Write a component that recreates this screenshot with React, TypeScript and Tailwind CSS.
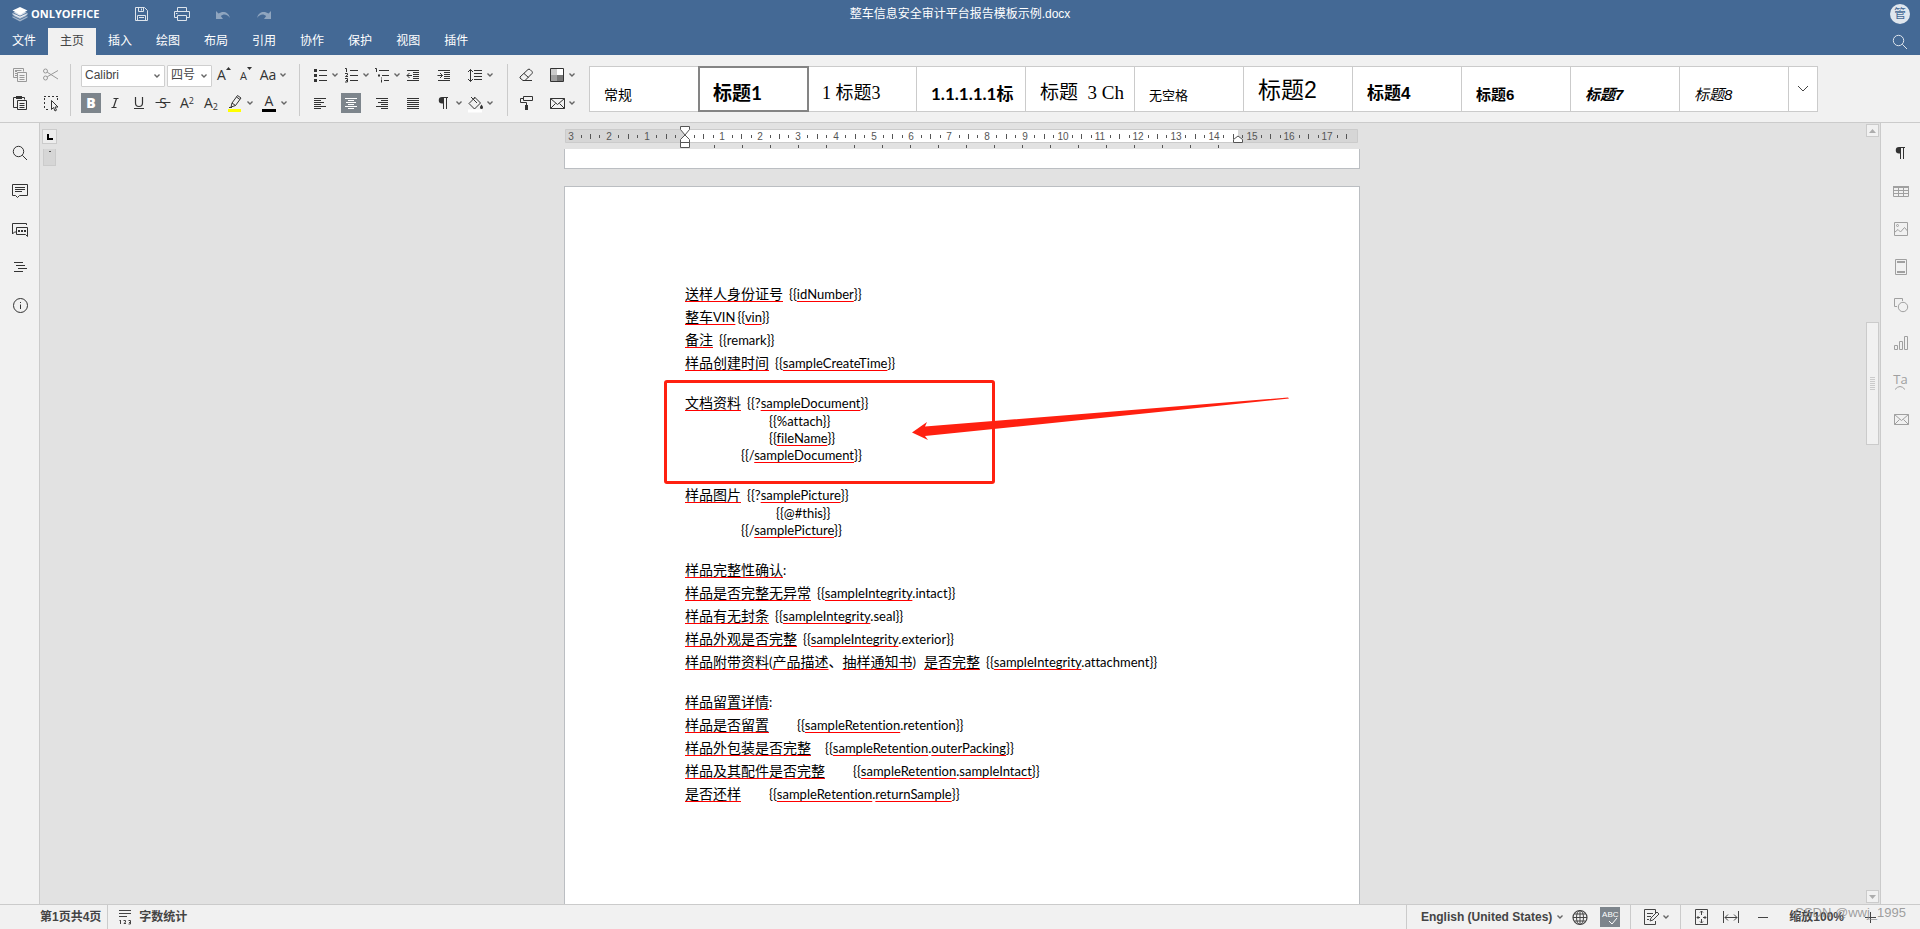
import { useState } from 'react';
import type { ReactNode } from 'react';
import clsx from 'clsx';

const tabs = ['文件', '主页', '插入', '绘图', '布局', '引用', '协作', '保护', '视图', '插件'];

const ui = "font-['Liberation_Sans','Noto_Sans_CJK_SC',sans-serif]";
const lato = "font-['Lato','Noto_Sans_CJK_SC',sans-serif]";
const serif = "font-['Liberation_Serif','Noto_Sans_CJK_SC',serif]";

const styleItems = [
  { name: '常规', cls: `${lato} text-[14px]` },
  { name: '标题1', cls: `${lato} text-[19px] font-bold` },
  { name: '1 标题3', cls: `${serif} text-[18px]` },
  { name: '1.1.1.1.1标', cls: `${lato} text-[17px] font-bold` },
  { name: '标题  3 Ch', cls: `${serif} text-[19px]` },
  { name: '无空格', cls: `${lato} text-[13px]` },
  { name: '标题2', cls: `${ui} text-[23px]` },
  { name: '标题4', cls: `${ui} text-[17px] font-bold` },
  { name: '标题6', cls: `${ui} text-[15px] font-bold` },
  { name: '标题7', cls: `${ui} text-[15px] font-bold italic` },
  { name: '标题8', cls: `${ui} text-[15px] italic` },
];

// ---------- icons ----------

function Icon({ children, className }: { children: ReactNode; className?: string }) {
  return (
    <svg
      width="20"
      height="20"
      viewBox="0 0 20 20"
      fill="none"
      stroke="currentColor"
      strokeWidth="1"
      className={clsx('shrink-0', className)}
      aria-hidden="true"
    >
      {children}
    </svg>
  );
}

function Chevron({ className }: { className?: string }) {
  return (
    <svg width="8" height="6" viewBox="0 0 8 6" fill="none" stroke="#666" strokeWidth="1.4" className={clsx('shrink-0', className)} aria-hidden="true">
      <path d="M1.5 1.5 4 4l2.500-2.500" />
    </svg>
  );
}

function Triangle({ down = false }: { down?: boolean }) {
  return (
    <svg width="5" height="3" viewBox="0 0 5 3" fill="currentColor" className="mt-0.5 shrink-0 self-start" aria-hidden="true">
      <path d={down ? 'M0 0h5L2.500 3z' : 'M2.500 0 5 3H0z'} />
    </svg>
  );
}

const dark = 'fill-current stroke-none';

const icons = {
  save: <Icon><path d="M4.500 3.500h9l3 3v10h-12zM7.500 3.500v4h5v-4M10.500 4.500v2M6.500 16.500v-5h8v5M8 13.500h5" /></Icon>,
  print: <Icon><path d="M5.500 7.500v-4h9v4M5.500 13.500h-3v-6h15v6h-3M5.500 11.500h9v5h-9zM4 9.500h1.500" /></Icon>,
  undo: <Icon><path className={dark} d="M3 7v8h7L7.800 12C10.500 9.300 14.500 10 17 14 15.500 7.500 9.500 6.500 5.500 9.600z" /></Icon>,
  redo: <Icon><path className={dark} d="M17 7v8h-7l2.200-3C9.500 9.300 5.500 10 3 14 4.500 7.500 10.500 6.500 14.500 9.600z" /></Icon>,
  search: <Icon><circle cx="8.500" cy="8.500" r="5.200" /><path d="m12.300 12.300 4.700 4.700" /></Icon>,
  copy: <Icon><path d="M7.500 12.500h-4v-9h10v3M5 6.500h2M5 8.500h2M5 10.500h2M5 5.500h6.500M7.500 7.500h9v9h-9zM9.500 10.500h5M9.500 12.500h5M9.500 14.500h5" /></Icon>,
  paste: <Icon><path d="M7.500 14.500h-4v-10h11v2" /><path className={dark} d="M6 3h6v3H6z" /><path d="M7.500 7.500h9v9h-9zM9.500 10.500h5M9.500 12.500h5M9.500 14.500h5" /></Icon>,
  cut: <Icon><circle cx="4.500" cy="6" r="2" /><circle cx="4.500" cy="13" r="2" /><path d="M6.200 7.200 17 14M6.200 11.800 17 5.500" /></Icon>,
  select: (
    <Icon>
      <path strokeDasharray="2 2" d="M3 3.500h14M3.500 5v12M16.500 5v3M5 16.500h4" />
      <path d="m10.500 7.500 6.500 6.500h-3l1.500 3.200-1.500.8-1.500-3.500-2 2z" fill="#f1f1f1" />
    </Icon>
  ),
  underline: <Icon><path d="M6.500 4v6a3.500 3.500 0 0 0 7 0V4M5 15.500h10" strokeWidth="1.200" /></Icon>,
  italic: <Icon><path d="M8.500 5.500h5M6.500 14.500h5M11.500 5.500 8.500 14.500" strokeWidth="1.200" /></Icon>,
  highlight: (
    <Icon>
      <path d="m7 10 5.500-7.500 3.500 2.500-5.500 7.500L6 14zM7 10l3.500 2.500M11.500 4l3.500 2.500M4 14.500h3" />
      <path d="M3 16h13v3H3z" fill="#ff0" stroke="none" />
    </Icon>
  ),
  bullets: <Icon><path className={dark} d="M4 4h3v3H4zM4 9h3v3H4zM4 14h3v3H4z" /><path d="M9 5.500h8M9 10.500h8M9 15.500h8" /></Icon>,
  numbering: (
    <Icon>
      <path d="M9 5.500h8M9 10.500h8M9 15.500h8" />
      <path d="M4 3.500h1.500V7M4 8.500h2.500v1.500L4.500 11.500H7M4 13.500h2.500v3.500H4M5 15.500h1.500" />
    </Icon>
  ),
  multilevel: (
    <Icon>
      <path d="M3 3.500h1.500V7M7 5.500h10M10 10.500h7M12 15.500h5" />
      <path className={dark} d="M6 9.500h2v2H6zM9 12.500h1v1H9zM9 14.500h1v3H9z" />
    </Icon>
  ),
  outdent: <Icon><path d="M4 5.500h12M10 7.500h6M10 9.500h6M10 11.500h6M10 13.500h6M4 15.500h12M9 10.500H4M6.500 8 4 10.500 6.500 13" /></Icon>,
  indent: <Icon><path d="M4 5.500h12M10 7.500h6M10 9.500h6M10 11.500h6M10 13.500h6M4 15.500h12M3.500 10.500h5M6 8l2.500 2.500L6 13" /></Icon>,
  spacing: <Icon><path d="M9 5.500h8M9 8.500h8M9 11.500h8M9 14.500h8M5.500 4.500v12M3 7l2.500-2.500L8 7M3 14l2.500 2.500L8 14" /></Icon>,
  alignLeft: <Icon><path d="M4 5.500h12M4 7.500h7M4 9.500h10M4 11.500h7M4 13.500h12M4 15.500h7" /></Icon>,
  alignCenter: <Icon><path d="M4 5.500h12M7 7.500h6M5 9.500h10M7 11.500h6M4 13.500h12M7 15.500h6" /></Icon>,
  alignRight: <Icon><path d="M4 5.500h12M9 7.500h7M6 9.500h10M9 11.500h7M4 13.500h12M9 15.500h7" /></Icon>,
  justify: <Icon><path d="M4 5.500h12M4 7.500h12M4 9.500h12M4 11.500h12M4 13.500h12M4 15.500h12" /></Icon>,
  pilcrow: <Icon><path className={dark} d="M8 4h6v1h-1v11h-1V5h-2v11H9v-5.500H8a3.200 3.200 0 0 1 0-6.500z" /></Icon>,
  shading: (
    <Icon>
      <path d="m4 10.500 6-6 5.500 5.500-6 6zM6 4l6 6M8 7l2-3" />
      <path className={dark} d="M16.500 11.500c1 1.500 1.500 2 1.500 3a1.500 1.500 0 0 1-3 0c0-1 .5-1.500 1.500-3z" />
      <path d="M3 16.500h14v3H3z" fill="#fff" stroke="none" />
    </Icon>
  ),
  eraser: <Icon><path d="m4 12 8-7.500q1-.8 2 0l2 2q.8 1 0 2L9 15.500H7L4 13zM8 8.500l4.500 4M7 15.500h9" /></Icon>,
  roller: <Icon><path d="M7.500 3.500h9v4h-9zM7.500 5.500h-3v4h6v3" /><path className={dark} d="M9 12h3v5H9z" /></Icon>,
  scheme: (
    <Icon>
      <path d="M4 4h6v6H4z" fill="#cbcbcb" stroke="none" />
      <path d="M10 4h6v6h-6z" fill="#fff" stroke="none" />
      <path d="M4 10h6v6H4z" fill="#a0a0a0" stroke="none" />
      <path d="M10 10h6v6h-6z" fill="#777" stroke="none" />
      <path d="M3.500 3.500h13v13h-13z" />
    </Icon>
  ),
  mail: <Icon><path d="M3.500 5.500h14v10h-14zM3.500 5.500l7 6 7-6M3.500 15.500l5-5M17.500 15.500l-5-5" /></Icon>,
  comments: <Icon><path d="M2.500 3.500h15v11h-8l-2 2-2-2h-3zM5 6.500h10M5 8.500h10M5 10.500h7" /></Icon>,
  chat: (
    <Icon>
      <path d="M16.500 6V4.500h-14v10.500l2-2h1.500M6.500 8.500h11v9l-2-2h-9z" />
      <path className={dark} d="M8 11h2v2H8zM11 11h2v2h-2zM14 11h2v2h-2z" />
    </Icon>
  ),
  headings: <Icon><path d="M4 5.500h9M6 8.500h9M8 11.500h9M4 14.500h9" /></Icon>,
  about: <Icon><circle cx="10.500" cy="10.500" r="7" /><path d="M10.500 9.500v4.500" /><path className={dark} d="M10 7h1v1h-1z" /></Icon>,
  table: <Icon><path className={dark} d="M2 5h16v2H2z" /><path d="M2.500 5.500h15v10h-15zM2.500 9.500h15M2.500 12.500h15M7.500 6v9.500M12.500 6v9.500" /></Icon>,
  image: <Icon><path d="M3.500 3.500h13v13h-13zM4 13l3-2.500 2.500 2.500 4-4.500 3 3.500" /><circle cx="6.500" cy="6.500" r="1" /></Icon>,
  header: <Icon><path d="M4.500 2.500h11v15h-11z" /><path className={dark} d="M6 4h8v2H6zM6 14h8v2H6z" /></Icon>,
  shape: <Icon><path d="M6 11.500H3.500v-8h8V6" /><circle cx="12" cy="12" r="4.700" /></Icon>,
  chart: <Icon><path d="M3.500 12.500h3v4h-3zM8.500 8.500h3v8h-3zM13.500 3.500h3v13h-3z" /></Icon>,
  globe: (
    <Icon>
      <circle cx="10" cy="10.500" r="7" strokeWidth="1.200" />
      <ellipse cx="10" cy="10.500" rx="3.500" ry="7" />
      <path d="M10 3.500v14M3 10.500h14M4.500 7h11M4.500 14h11" />
    </Icon>
  ),
  review: <Icon><path d="M14.500 7V2.500h-11v15h11V14M6 6.500h6M6 9.500h4M6 12.500h2M9 14l1-3 6-6 2 2-6 6z" /></Icon>,
  fitPage: (
    <Icon>
      <path d="M4.500 2.500h12v15h-12z" />
      <path d="M10.500 4v4M10.500 12v4M6 10.500h3M12 10.500h3M9 5.500 10.500 4 12 5.500M9 14.500l1.500 1.500 1.500-1.500M7.500 9 6 10.500 7.500 12M13.500 9l1.500 1.500-1.500 1.500" />
    </Icon>
  ),
  fitWidth: <Icon><path d="M2.500 4v12M17.500 4v12M4 10.500h12M7 7.500 4 10.500l3 3M13 7.500l3 3-3 3" /></Icon>,
  minus: <Icon><path d="M5 10.500h10" /></Icon>,
  plus: <Icon><path d="M5 10.500h11M10.500 5v11" /></Icon>,
  wordCount: (
    <Icon>
      <path d="M4 3.500h12M4 6.500h12M4 9.500h8M5.500 13v4M4.500 13.500h1M8.500 13.500h2v1.500l-1.500 1.500h2M13.500 13.500h2v3.500h-2M14 15.500h1.500" />
    </Icon>
  ),
};

function Logo() {
  return (
    <svg width="16" height="15" viewBox="0 0 16 15" fill="#fff" aria-hidden="true">
      <path d="M8 5.500 15.500 9v1.500L8 14.500.5 10.500V9z" opacity=".5" />
      <path d="M8 3 15.500 6v1.500L8 11 .5 7.500V6z" opacity=".75" />
      <path d="M8 0l7.500 3.500L8 7.500.5 3.500z" />
      <path d="M.5 5.200 8 8.800l7.500-3.600v.7L8 9.500.5 5.900zM.5 8.500 8 12l7.500-3.500v.7L8 12.800.5 9.200z" fill="#446995" />
    </svg>
  );
}

// ---------- toolbar ----------

function Tool({
  label,
  children,
  arrow = false,
  active = false,
  disabled = false,
  className,
}: {
  label: string;
  children: ReactNode;
  arrow?: boolean;
  active?: boolean;
  disabled?: boolean;
  className?: string;
}) {
  return (
    <button
      type="button"
      title={label}
      aria-label={label}
      disabled={disabled}
      className={clsx('flex h-5 shrink-0 items-center', disabled ? 'text-[#999]' : 'text-[#333]', className)}
    >
      <span className={clsx('flex h-5 w-5 items-center justify-center', active && 'bg-[#7d858c] text-white')}>
        {children}
      </span>
      {arrow && <Chevron className="ml-px" />}
    </button>
  );
}

function Combo({ label, value, className }: { label: string; value: string; className: string }) {
  return (
    <label className={clsx('relative h-[22px] shrink-0', className)}>
      <select
        aria-label={label}
        className="block h-full w-full appearance-none rounded-[1px] border border-[#cfcfcf] bg-white pb-0.5 pl-[3px] text-xs text-[#444] outline-none"
      >
        <option>{value}</option>
      </select>
      <Chevron className="pointer-events-none absolute top-2 right-1" />
    </label>
  );
}

function Separator({ className }: { className?: string }) {
  return <div className={clsx('h-[52px] w-px shrink-0 bg-[#cbcbcb]', className)} />;
}

const cell = 'w-[30px]';
const glyph = "font-['Open_Sans',sans-serif] text-[14px] leading-none";
const smallGlyph = "font-['Open_Sans',sans-serif] text-[11px] leading-none";

function Toolbar() {
  const [current, setCurrent] = useState('标题1');

  return (
    <div className="flex h-[68px] shrink-0 border-b border-[#cbcbcb] bg-[#f1f1f1] pt-[9px] pl-2.5">
      <div className="grid h-12 shrink-0 grid-cols-2 gap-x-[11px] gap-y-2 pt-px">
        <Tool label="复制" disabled>{icons.copy}</Tool>
        <Tool label="剪切" disabled>{icons.cut}</Tool>
        <Tool label="粘贴">{icons.paste}</Tool>
        <Tool label="全选">{icons.select}</Tool>
      </div>
      <Separator className="mr-2.5 ml-[9px]" />

      <div className="flex shrink-0 flex-col gap-2 pt-px">
        <div className="flex h-5 gap-0.5">
          <Combo label="字体" value="Calibri" className="w-[84px]" />
          <Combo label="字号" value="四号" className="w-[45px]" />
          <Tool label="增大字号"><span className={glyph}>A</span><Triangle /></Tool>
          <Tool label="减小字号"><span className={smallGlyph}>A</span><Triangle down /></Tool>
          <Tool label="更改大小写" arrow className={cell}><span className={glyph}>Aa</span></Tool>
        </div>
        <div className="flex h-5 gap-1">
          <Tool label="加粗" active><span className={clsx(glyph, 'font-extrabold')}>B</span></Tool>
          <Tool label="斜体">{icons.italic}</Tool>
          <Tool label="下划线">{icons.underline}</Tool>
          <Tool label="删除线"><span className={clsx(glyph, 'line-through')}>&nbsp;S&nbsp;</span></Tool>
          <Tool label="上标"><span className={glyph}>A<sup className="text-[9px]">2</sup></span></Tool>
          <Tool label="下标"><span className={glyph}>A<sub className="text-[9px]">2</sub></span></Tool>
          <Tool label="突出显示颜色" arrow className={cell}>{icons.highlight}</Tool>
          <Tool label="字体颜色" arrow className={cell}>
            <span className="flex h-[18px] w-[14px] flex-col items-center justify-end border-b-[3px] border-black font-['Open_Sans',sans-serif] text-sm leading-4">
              A
            </span>
          </Tool>
        </div>
      </div>
      <Separator className="mr-2.5 ml-2.5" />

      <div className="grid h-12 shrink-0 grid-cols-6 gap-x-px gap-y-2 pt-px">
        <Tool label="项目符号" arrow className={cell}>{icons.bullets}</Tool>
        <Tool label="编号" arrow className={cell}>{icons.numbering}</Tool>
        <Tool label="多级列表" arrow className={cell}>{icons.multilevel}</Tool>
        <Tool label="减少缩进" className={cell}>{icons.outdent}</Tool>
        <Tool label="增加缩进" className={cell}>{icons.indent}</Tool>
        <Tool label="行间距" arrow className={cell}>{icons.spacing}</Tool>
        <Tool label="左对齐" className={cell}>{icons.alignLeft}</Tool>
        <Tool label="居中" active className={cell}>{icons.alignCenter}</Tool>
        <Tool label="右对齐" className={cell}>{icons.alignRight}</Tool>
        <Tool label="两端对齐" className={cell}>{icons.justify}</Tool>
        <Tool label="非打印字符" arrow className={cell}>{icons.pilcrow}</Tool>
        <Tool label="底纹" arrow className={cell}>{icons.shading}</Tool>
      </div>
      <Separator className="mr-2 ml-3" />

      <div className="grid h-12 shrink-0 grid-cols-2 gap-x-px gap-y-2 pt-px">
        <Tool label="清除样式" className={cell}>{icons.eraser}</Tool>
        <Tool label="颜色方案" arrow className={cell}>{icons.scheme}</Tool>
        <Tool label="复制样式" className={cell}>{icons.roller}</Tool>
        <Tool label="邮件合并" arrow className={cell}>{icons.mail}</Tool>
      </div>

      <div className="mt-0.5 mr-[102px] ml-3 flex h-[46px] min-w-0 flex-1 border border-[#cbcbcb] bg-white">
        {styleItems.map((s) => (
          <button
            key={s.name}
            type="button"
            onClick={() => setCurrent(s.name)}
            className={clsx(
              'flex min-w-0 flex-1 items-end overflow-hidden border-r border-[#cbcbcb] pb-[9px] pl-3.5 leading-none whitespace-pre text-black',
              s.name === current && 'outline-2 -outline-offset-1 outline-[#848484]',
              s.cls,
            )}
          >
            {s.name}
          </button>
        ))}
        <button type="button" aria-label="更多样式" className="flex w-7 shrink-0 items-center justify-center">
          <svg width="12" height="8" viewBox="0 0 12 8" fill="none" stroke="#444" aria-hidden="true">
            <path d="m1 1 5 5 5-5" />
          </svg>
        </button>
      </div>
    </div>
  );
}

// ---------- ruler ----------

const CM = 37.8;
const ZERO = 119.5;

function Ruler() {
  const quarters = Array.from({ length: 83 }, (_, i) => i - 12);
  const stops = Array.from({ length: 19 }, (_, i) => i + 1);

  return (
    <svg width="794" height="26" viewBox="0 0 794 26" className="block shrink-0 overflow-visible" aria-label="标尺">
      <path d="M.5 6.500h792v13H.5z" fill="#d6d6d6" stroke="#cbcbcb" />
      <path d="M120 7h553v12H120z" fill="#fff" />
      {quarters.map((q) => {
        const x = Math.round(ZERO + (q * CM) / 4);
        if (q === 0 || x > 785) return null;
        if (q % 4 === 0) {
          return (
            <text key={q} x={x} y="17" textAnchor="middle" className="fill-[#555] font-['Liberation_Sans',sans-serif] text-[10px]">
              {Math.abs(q / 4)}
            </text>
          );
        }
        const h = q % 2 === 0 ? 5 : 3;
        return <rect key={q} x={x} y={h === 5 ? 11 : 12} width="1" height={h} fill="#555" />;
      })}
      {stops.map((n) => (
        <rect key={n} x={Math.round(ZERO + n * 28) + 1} y="22" width="1" height="3" fill="#555" />
      ))}
      <path d="M115.500 3.500h9v3l-4.500 5.500-4.500-5.500z" fill="#fff" stroke="#555" />
      <path d="M115.500 19.500v-3L120 12l4.500 4.500v3zM115.500 19.500h9v5h-9z" fill="#fff" stroke="#555" />
      <path d="M668.500 19.500v-3L673 13l4.500 3.500v3z" fill="#fff" stroke="#555" />
    </svg>
  );
}

// ---------- document ----------

// misspelled words carry a red underline
function W({ children, cn = false }: { children: ReactNode; cn?: boolean }) {
  return (
    <span className={clsx('underline decoration-[#f00] decoration-1 underline-offset-2 [text-decoration-skip-ink:none]', cn && 'text-[14px]')}>
      {children}
    </span>
  );
}

function Row({ children }: { children: ReactNode }) {
  return <p className="h-[23px] pt-[5px]">{children}</p>;
}

function Blank() {
  return <div className="h-[17px]" />;
}

function DocumentBody() {
  return (
    <div className="pt-[93px] pl-[120px] font-['Lato','Noto_Sans_CJK_SC',sans-serif] text-[13px] leading-[17px] whitespace-nowrap text-black [font-variant-ligatures:none]">
      <Row><W cn>送样人身份证号</W><span className="ml-1.5">{'{{'}<W>idNumber</W>{'}}'}</span></Row>
      <Row><W><span className="text-[14px]">整车</span>VIN</W><span className="ml-0.5">{'{{'}<W>vin</W>{'}}'}</span></Row>
      <Row><W cn>备注</W><span className="ml-1.5">{'{{remark}}'}</span></Row>
      <Row><W cn>样品创建时间</W><span className="ml-1.5">{'{{'}<W>sampleCreateTime</W>{'}}'}</span></Row>
      <Blank />
      <Row><W cn>文档资料</W><span className="ml-1.5">{'{{?'}<W>sampleDocument</W>{'}}'}</span></Row>
      <p className="mt-px pl-[84px]">{'{{%attach}}'}</p>
      <p className="pl-[84px]">{'{{'}<W>fileName</W>{'}}'}</p>
      <p className="pl-14">{'{{/'}<W>sampleDocument</W>{'}}'}</p>
      <Blank />
      <Row><W cn>样品图片</W><span className="ml-1.5">{'{{?'}<W>samplePicture</W>{'}}'}</span></Row>
      <p className="mt-px pl-[91px]">{'{{@#this}}'}</p>
      <p className="pl-14">{'{{/'}<W>samplePicture</W>{'}}'}</p>
      <Blank />
      <Row><W cn>样品完整性确认</W>:</Row>
      <Row><W cn>样品是否完整无异常</W><span className="ml-1.5">{'{{'}<W>sampleIntegrity</W>{'.intact}}'}</span></Row>
      <Row><W cn>样品有无封条</W><span className="ml-1.5">{'{{'}<W>sampleIntegrity</W>{'.seal}}'}</span></Row>
      <Row><W cn>样品外观是否完整</W><span className="ml-1.5">{'{{'}<W>sampleIntegrity</W>{'.exterior}}'}</span></Row>
      <Row>
        <W cn>样品附带资料</W>(<W cn>产品描述</W><span className="text-[14px]">、</span><W cn>抽样通知书</W>)
        <span className="ml-2"><W cn>是否完整</W></span>
        <span className="ml-1.5">{'{{'}<W>sampleIntegrity</W>{'.attachment}}'}</span>
      </Row>
      <Blank />
      <Row><W cn>样品留置详情</W>:</Row>
      <Row><W cn>样品是否留置</W><span className="ml-7">{'{{'}<W>sampleRetention</W>{'.retention}}'}</span></Row>
      <Row><W cn>样品外包装是否完整</W><span className="ml-3.5">{'{{'}<W>sampleRetention</W>.<W>outerPacking</W>{'}}'}</span></Row>
      <Row><W cn>样品及其配件是否完整</W><span className="ml-7">{'{{'}<W>sampleRetention</W>.<W>sampleIntact</W>{'}}'}</span></Row>
      <Row><W cn>是否还样</W><span className="ml-7">{'{{'}<W>sampleRetention</W>.<W>returnSample</W>{'}}'}</span></Row>
    </div>
  );
}

function Annotation() {
  return (
    <>
      <div className="absolute top-[193px] left-[99px] h-[104px] w-[331px] rounded-[3px] border-[3px] border-[#ff2010]" />
      <svg width="380" height="48" viewBox="0 0 380 48" className="absolute top-[208px] left-[346px]" aria-hidden="true">
        <path d="M1 37.500 16 27l-2 4.500L377 2.500l1 1L14 41l3 4z" fill="#ff2010" />
      </svg>
    </>
  );
}

// ---------- side panels ----------

function SideButton({ label, children, muted = false }: { label: string; children: ReactNode; muted?: boolean }) {
  return (
    <button
      type="button"
      title={label}
      aria-label={label}
      className={clsx('flex h-5 w-5 items-center justify-center', muted ? 'text-[#a0a0a0]' : 'text-[#333]')}
    >
      {children}
    </button>
  );
}

function ScrollArrow({ up = false }: { up?: boolean }) {
  return (
    <button
      type="button"
      aria-label={up ? '向上滚动' : '向下滚动'}
      className="flex h-[13px] w-[13px] shrink-0 items-center justify-center border border-[#cbcbcb] bg-[#f1f1f1]"
    >
      <svg width="7" height="4" viewBox="0 0 7 4" fill="#adadad" aria-hidden="true">
        <path d={up ? 'M3.500 0 7 4H0z' : 'M0 0h7L3.500 4z'} />
      </svg>
    </button>
  );
}

function StatusBar() {
  const sep = 'w-px self-stretch bg-[#cbcbcb]';
  return (
    <footer className="flex h-[25px] shrink-0 items-center border-t border-[#cbcbcb] bg-[#f1f1f1] text-xs font-bold text-[#444]">
      <button type="button" className="pr-1.5 pl-10">第1页共4页</button>
      <div className={sep} />
      <button type="button" className="flex items-center gap-1 pl-[7px]">
        {icons.wordCount}
        字数统计
      </button>

      <div className={clsx(sep, 'ml-auto')} />
      <button type="button" className="flex items-center gap-1 pl-3.5">
        English (United States)
        <Chevron />
      </button>
      <button type="button" aria-label="设置文档语言" className="ml-1.5">{icons.globe}</button>
      <button
        type="button"
        aria-label="拼写检查"
        className="relative ml-2.5 flex h-5 w-5 justify-center bg-[#7d858c] pt-1 text-[8px] leading-[8px] font-normal text-white"
      >
        ABC
        <svg width="10" height="8" viewBox="0 0 10 8" fill="none" stroke="#fff" className="absolute right-0.5 bottom-0.5" aria-hidden="true">
          <path d="m1 4 3 3 5-6" />
        </svg>
      </button>
      <div className={clsx(sep, 'ml-2.5')} />
      <button type="button" aria-label="审阅" className="ml-2.5 flex items-center gap-px">
        {icons.review}
        <Chevron />
      </button>
      <div className={clsx(sep, 'ml-2.5')} />
      <button type="button" aria-label="适合页面" className="ml-2.5">{icons.fitPage}</button>
      <button type="button" aria-label="适合宽度" className="ml-2.5">{icons.fitWidth}</button>
      <button type="button" aria-label="缩小" className="ml-3">{icons.minus}</button>
      <button type="button" className="ml-4">缩放100%</button>
      <button type="button" aria-label="放大" className="mr-10 ml-4">{icons.plus}</button>
    </footer>
  );
}

export default function App() {
  const [activeTab, setActiveTab] = useState('主页');

  return (
    <div className={clsx('relative flex h-screen flex-col overflow-hidden bg-[#e2e2e2]', ui)}>
      <header className="shrink-0 bg-[#446995] text-white">
        <div className="grid h-7 grid-cols-[1fr_auto_1fr] items-center">
          <div className="flex items-center pl-3">
            <a href="#home" className="flex items-center gap-[3px] font-['Open_Sans',sans-serif] text-[11px] font-bold">
              <Logo />
              ONLYOFFICE
            </a>
            <div className="ml-8 flex items-center gap-[21px]">
              <button type="button" aria-label="保存" className="text-[#dde4ec]">{icons.save}</button>
              <button type="button" aria-label="打印" className="text-[#dde4ec]">{icons.print}</button>
              <button type="button" aria-label="撤消" disabled className="text-[#8fa5bf]">{icons.undo}</button>
              <button type="button" aria-label="重做" disabled className="text-[#8fa5bf]">{icons.redo}</button>
            </div>
          </div>
          <h1 className="text-xs">整车信息安全审计平台报告模板示例.docx</h1>
          <div className="flex justify-end pr-2.5">
            <span className="flex h-5 w-5 items-center justify-center rounded-full bg-[#dfe6ee] text-xs text-[#446995]">管</span>
          </div>
        </div>
        <nav className="flex h-[27px] items-stretch text-xs">
          {tabs.map((tab) => (
            <button
              key={tab}
              type="button"
              onClick={() => setActiveTab(tab)}
              className={clsx('px-3 pb-0.5', tab === activeTab && 'bg-[#f1f1f1] text-[#444]')}
            >
              {tab}
            </button>
          ))}
          <button type="button" aria-label="搜索" className="mr-2.5 ml-auto text-[#dde4ec]">{icons.search}</button>
        </nav>
      </header>

      <Toolbar />

      <div className="flex min-h-0 flex-1">
        <aside className="flex w-10 shrink-0 flex-col items-center gap-[18px] border-r border-[#cbcbcb] bg-[#f1f1f1] pt-5">
          <SideButton label="查找">{icons.search}</SideButton>
          <SideButton label="批注">{icons.comments}</SideButton>
          <SideButton label="聊天">{icons.chat}</SideButton>
          <SideButton label="标题">{icons.headings}</SideButton>
          <SideButton label="关于">{icons.about}</SideButton>
        </aside>

        <div className="w-[18px] shrink-0 pt-1.5 pl-0.5">
          <button type="button" aria-label="制表位" className="flex h-[15px] w-[15px] items-center justify-center border border-[#cbcbcb] bg-[#ededed]">
            <span className="h-[6px] w-[6px] border-b-2 border-l-2 border-black" />
          </button>
          <div className="mt-[5px] ml-px flex h-[17px] w-[13px] justify-center border border-t-0 border-[#cbcbcb] bg-[#d6d6d6] pt-0.5">
            <span className="h-px w-0.5 bg-[#555]" />
          </div>
        </div>

        <main className="flex min-w-0 flex-1 flex-col items-center overflow-hidden">
          <Ruler />
          <div className="h-5 w-[796px] shrink-0 border border-t-0 border-[#bbbec2] bg-white" />
          <div className="relative mt-[17px] w-[796px] flex-1 border border-b-0 border-[#bbbec2] bg-white">
            <DocumentBody />
            <Annotation />
          </div>
        </main>

        <div className="flex w-3.5 shrink-0 flex-col py-px">
          <ScrollArrow up />
          <div className="mt-[185px] flex h-[123px] w-[13px] flex-col items-center justify-center gap-px border border-[#cbcbcb] bg-[#f1f1f1]">
            {Array.from({ length: 7 }).map((_, i) => (
              <span key={i} className="h-px w-[5px] bg-[#cbcbcb]" />
            ))}
          </div>
          <div className="flex-1" />
          <ScrollArrow />
        </div>

        <aside className="flex w-10 shrink-0 flex-col items-center gap-[18px] border-l border-[#cbcbcb] bg-[#f1f1f1] pt-5">
          <SideButton label="段落设置">{icons.pilcrow}</SideButton>
          <SideButton label="表格设置" muted>{icons.table}</SideButton>
          <SideButton label="图像设置" muted>{icons.image}</SideButton>
          <SideButton label="页眉和页脚设置" muted>{icons.header}</SideButton>
          <SideButton label="形状设置" muted>{icons.shape}</SideButton>
          <SideButton label="图表设置" muted>{icons.chart}</SideButton>
          <SideButton label="文字艺术设置" muted>
            <span className="flex flex-col items-center font-['Open_Sans',sans-serif] text-[13px] leading-3">
              Ta
              <svg width="12" height="5" viewBox="0 0 12 5" fill="none" stroke="currentColor" aria-hidden="true">
                <path d="M1 4.500q5-6 10 0" />
              </svg>
            </span>
          </SideButton>
          <SideButton label="邮件合并设置" muted>{icons.mail}</SideButton>
        </aside>
      </div>

      <StatusBar />
      <span className="pointer-events-none absolute right-3.5 bottom-2 text-[13px] leading-4 text-[#888]/80">CSDN @wwj_1995</span>
    </div>
  );
}
